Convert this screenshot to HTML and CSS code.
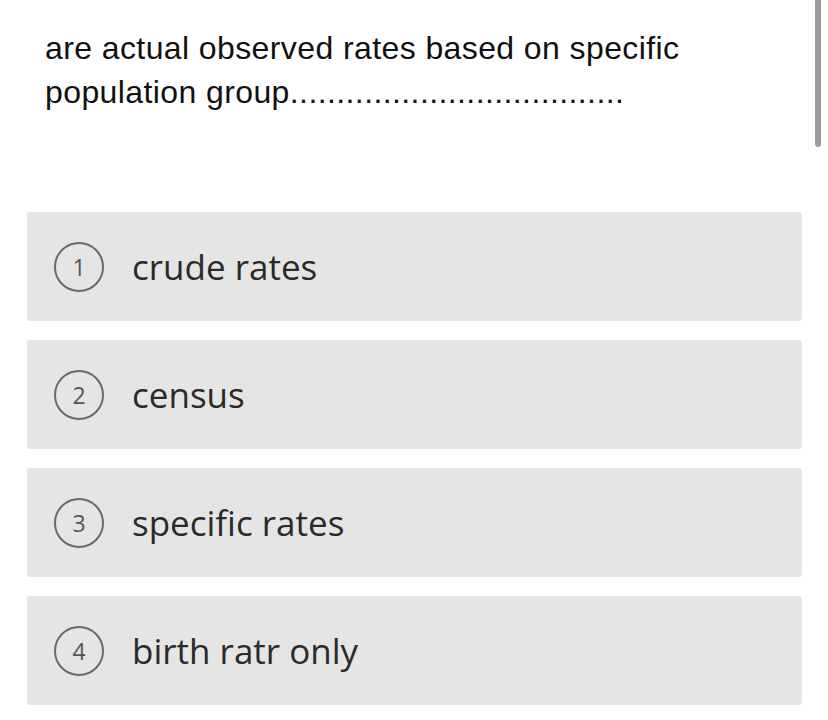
FILE: index.html
```html
<!DOCTYPE html>
<html>
<head>
<meta charset="utf-8">
<link rel="stylesheet" href="styles.css">
</head>
<body>
<div class="page">
  <div class="scrollbar"></div>
  <p class="question">are actual observed rates based on specific population group....................................</p>
  <div class="options">
    <div class="option"><span class="num">1</span><span class="label">crude rates</span></div>
    <div class="option"><span class="num">2</span><span class="label">census</span></div>
    <div class="option"><span class="num">3</span><span class="label">specific rates</span></div>
    <div class="option"><span class="num">4</span><span class="label">birth ratr only</span></div>
  </div>
</div>
</body>
</html>
```
FILE: styles.css
```css
html, body {
  margin: 0;
  padding: 0;
  background: #ffffff;
}
.page {
  position: relative;
  width: 828px;
  height: 720px;
  overflow: hidden;
  padding: 0 27px;
  box-sizing: border-box;
}
.scrollbar {
  position: absolute;
  top: 0;
  left: 815px;
  width: 6px;
  height: 147px;
  background: #9c9c9c;
  border-radius: 0 0 3px 3px;
}
.question {
  margin: 0;
  padding: 26px 110px 0 18px;
  font-family: "Liberation Sans", Arial, sans-serif;
  font-size: 32px;
  letter-spacing: 0.4px;
  line-height: 44px;
  color: #111111;
}
.options {
  margin-top: 98px;
  display: flex;
  flex-direction: column;
  gap: 19px;
  width: 775px;
}
.option {
  height: 109px;
  background: #e5e5e5;
  border-radius: 3px;
  display: flex;
  align-items: center;
  padding-left: 27px;
  box-sizing: border-box;
}
.num {
  width: 46px;
  height: 46px;
  border: 2px solid #6a6a6a;
  border-radius: 50%;
  display: flex;
  align-items: center;
  justify-content: center;
  font-family: "Open Sans", sans-serif;
  font-size: 23px;
  color: #555555;
  flex: none;
}
.label {
  margin-left: 28px;
  font-family: "Open Sans", sans-serif;
  font-size: 35px;
  color: #2a2a2a;
}
```
